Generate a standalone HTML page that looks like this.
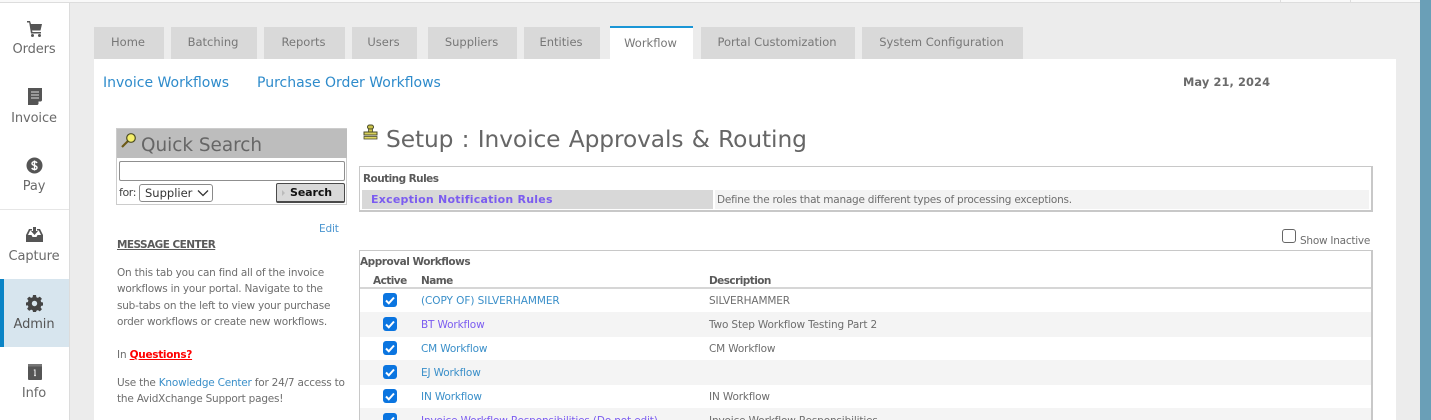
<!DOCTYPE html>
<html><head><meta charset="utf-8">
<style>
html,body{margin:0;padding:0;width:1431px;height:420px;overflow:hidden;background:#ececec}
*{box-sizing:border-box}
#w{position:relative;width:1431px;height:420px;overflow:hidden;background:#ececec}
.a{position:absolute}
.t{position:absolute;white-space:nowrap;line-height:16px}
.v{font-family:"DejaVu Sans",sans-serif}
.l{font-family:"DejaVu Sans",sans-serif;font-size:10.5px;color:#6e6e6e;letter-spacing:-.15px}
.m{letter-spacing:-.22px}
.h{font-weight:bold;color:#5a5a5a;letter-spacing:-.55px}
.tab{position:absolute;top:27px;height:32px;background:#d9d9d9;color:#777;font:11.5px/31px "DejaVu Sans",sans-serif;text-align:center;padding-right:2px}
.nav{position:absolute;left:-1px;width:70px;text-align:center;color:#6a6a6a;font:13px/16px "DejaVu Sans",sans-serif;letter-spacing:-.1px}
.lnk{color:#3a8fc9}.vis{color:#7b5cf0}
.cb{position:absolute;left:383px;width:14px;height:14px;border-radius:3px;background:#0b75e0}
.cb svg{display:block}
</style></head><body><div id="w">
<div class="a" style="left:0;top:0;width:1431px;height:3px;background:#f9f9f9;border-bottom:1px solid #ddd"></div>
<div class="a" style="left:1280px;top:0;width:1px;height:2px;background:#ddd"></div>
<div class="a" style="left:1350px;top:0;width:1px;height:2px;background:#ddd"></div>
<div class="a" style="left:1420px;top:0;width:11px;height:420px;background:#6a9fb7"></div>

<!-- sidebar -->
<div class="a" style="left:0;top:3px;width:70px;height:417px;background:#fff;border-right:1px solid #dcdcdc"></div>
<div class="a" style="left:0;top:209px;width:69px;height:1px;background:#e6e6e6"></div>
<div class="a" style="left:0;top:279px;width:69px;height:68px;background:#d7e5ee"></div>
<div class="a" style="left:0;top:279px;width:4px;height:68px;background:#0a84c6"></div>

<div class="nav" style="top:42px">Orders</div>
<svg class="a" style="left:27px;top:21px" width="16" height="16" viewBox="0 0 16 16"><path d="M0 0h3l1 3h11l-1.500 6.500H5L5.500 11H14v1.500H4L2.200 1.500H0z" fill="#555"/><circle cx="5.500" cy="14.500" r="1.500" fill="#555"/><circle cx="12.500" cy="14.500" r="1.500" fill="#555"/></svg>

<div class="nav" style="top:111px">Invoice</div>
<svg class="a" style="left:28px;top:88px" width="14" height="17" viewBox="0 0 14 17"><path d="M0 0h14v12.500L9.500 17H0z" fill="#555"/><path d="M3 4h8M3 7h8M3 10h8" stroke="#ddd" stroke-width="1"/><path d="M10.500 13.500H14L10.500 17z" fill="#fff"/></svg>

<div class="nav" style="top:179px">Pay</div>
<svg class="a" style="left:26px;top:157px" width="17" height="17" viewBox="0 0 17 17"><circle cx="8.500" cy="8.500" r="8" fill="#555"/><path d="M11 6c-.5-1-1.500-1.300-2.500-1.300S6 5.200 6 6.500 7.300 8 8.500 8.500 11 9.300 11 10.600s-1.300 1.800-2.500 1.800S6.300 12 5.800 11M8.500 3.500v10" stroke="#fff" stroke-width="1.400" fill="none"/></svg>

<div class="nav" style="top:249px">Capture</div>
<svg class="a" style="left:26px;top:227px" width="17" height="15" viewBox="0 0 17 15"><path d="M3 2h3v1.500H4.200L2 8h3.500l1 2h4l1-2H15l-2.200-4.500H11V2h3l3 6v7H0V8z" fill="#555"/><path d="M7 0h3v4h2L8.500 8 5 4h2z" fill="#555"/></svg>

<div class="nav" style="top:317px;color:#555">Admin</div>
<svg class="a" style="left:26px;top:295px" width="17" height="17" viewBox="0 0 17 17"><path d="M7 0h3l.4 2.300 1.500.6L13.800 1.600 15.900 3.700l-1.300 1.900.6 1.500L17 7.500v3l-1.800.4-.6 1.500 1.300 1.900-2.100 2.100-1.900-1.300-1.500.6L10 17H7l-.4-1.800-1.500-.6-1.900 1.300-2.100-2.100 1.300-1.900-.6-1.500L0 10.500v-3l1.800-.4.6-1.500L1.100 3.700 3.200 1.600l1.900 1.300 1.500-.6z" fill="#444"/><circle cx="8.500" cy="8.500" r="2.700" fill="#d7e5ee"/></svg>

<div class="nav" style="top:386px">Info</div>
<svg class="a" style="left:28px;top:364px" width="14" height="16" viewBox="0 0 14 16"><rect width="14" height="16" rx="1" fill="#555"/><rect y="0" width="14" height="2.500" fill="#777"/><path d="M7.500 6h-1.700M7 6.500v5M6 11.500h2" stroke="#ddd" stroke-width="1.200" fill="none"/></svg>

<!-- tabs -->
<div class="tab" style="left:94px;width:70px">Home</div>
<div class="tab" style="left:171px;width:86px">Batching</div>
<div class="tab" style="left:264px;width:81px">Reports</div>
<div class="tab" style="left:352px;width:65px">Users</div>
<div class="tab" style="left:428px;width:89px">Suppliers</div>
<div class="tab" style="left:524px;width:76px">Entities</div>
<div class="tab" style="left:701px;width:154px">Portal Customization</div>
<div class="tab" style="left:862px;width:161px">System Configuration</div>

<!-- content panel -->
<div class="a" style="left:94px;top:59px;width:1302px;height:361px;background:#fff"></div>
<div class="tab" style="left:610px;width:83px;top:26px;height:33px;background:#fff;border-top:2px solid #1b96d6;line-height:30px">Workflow</div>

<div class="t v" style="left:103px;top:74.500px;font-size:14px;color:#2e8bcb">Invoice Workflows</div>
<div class="t v" style="left:257px;top:74.500px;font-size:14px;color:#2e8bcb">Purchase Order Workflows</div>
<div class="t v" style="left:1183px;top:74px;font-size:11.4px;font-weight:bold;color:#6b6b6b;letter-spacing:.1px">May 21, 2024</div>

<!-- quick search -->
<div class="a" style="left:116px;top:128px;width:231px;height:77px;background:#fff;border:1px solid #ccc"></div>
<div class="a" style="left:117px;top:129px;width:230px;height:29px;background:#bdbdbd"></div>
<svg class="a" style="left:120px;top:132px" width="17" height="17" viewBox="0 0 17 17"><path d="M8 9L2 15" stroke="#6d5a18" stroke-width="2.200"/><circle cx="11" cy="6" r="4.300" fill="#f5ef6a" stroke="#4b4b20" stroke-width="1.200"/></svg>
<div class="t v" style="left:141px;top:135px;font-size:18.4px;line-height:22px;color:#666">Quick Search</div>
<div class="a" style="left:119px;top:161px;width:226px;height:20px;background:#fff;border:1px solid #8f8f8f;border-radius:2px"></div>
<div class="t l" style="left:119px;top:185px;font-size:11px;color:#444;letter-spacing:-.4px">for:</div>
<div class="a v" style="left:139px;top:184px;width:74px;height:18px;border:1px solid #8a8a8a;border-radius:3px;font-size:11.500px;line-height:16px;padding-left:5px;color:#333;background:#fff">Supplier<svg class="a" style="left:57px;top:4px" width="12" height="8" viewBox="0 0 12 8"><path d="M1 1.500l5 5 5-5" fill="none" stroke="#333" stroke-width="1.300"/></svg></div>
<div class="a v" style="left:276px;top:183px;width:69px;height:20px;background:#d9d9d9;border:1px solid #4a4a4a;border-bottom-width:2px;border-radius:2px;font-size:11px;font-weight:bold;line-height:17px;color:#111;text-align:center;padding-left:1px;letter-spacing:-.1px">Search</div>
<div class="a" style="left:282px;top:190px;width:0;height:0;border-left:3px solid #bbb;border-top:3px solid transparent;border-bottom:3px solid transparent"></div>

<!-- message center -->
<div class="t l" style="left:319px;top:221px;color:#4a95d0;font-size:10.5px;letter-spacing:-.15px">Edit</div>
<div class="t l h" style="left:117px;top:237px;text-decoration:underline">MESSAGE CENTER</div>
<div class="t l m" style="left:117px;top:265px">On this tab you can find all of the invoice</div>
<div class="t l m" style="left:117px;top:281px">workflows in your portal. Navigate to the</div>
<div class="t l m" style="left:117px;top:298px">sub-tabs on the left to view your purchase</div>
<div class="t l m" style="left:117px;top:314px">order workflows or create new workflows.</div>
<div class="t l" style="left:117px;top:347px">In <b style="color:#f00;text-decoration:underline;letter-spacing:-.3px">Questions?</b></div>
<div class="t l m" style="left:117px;top:375px">Use the <span style="color:#3a8fc9">Knowledge Center</span> for 24/7 access to</div>
<div class="t l m" style="left:117px;top:391px">the AvidXchange Support pages!</div>

<!-- heading -->
<svg class="a" style="left:363px;top:124px" width="15" height="16" viewBox="0 0 15 16"><rect x="4.500" y="1" width="6" height="4" rx="2" fill="#c9c24a" stroke="#4a4a2a"/><rect x="5.500" y="5" width="4" height="3" fill="#c9c24a" stroke="#4a4a2a" stroke-width=".8"/><rect x="1" y="8" width="13" height="3" fill="#d8d05a" stroke="#4a4a2a"/><rect x="1" y="12.500" width="13" height="2.500" fill="#e0d860" stroke="#4a4a2a" stroke-width=".8"/></svg>
<div class="t v" style="left:386px;top:125px;font-size:23.3px;line-height:30px;color:#666;letter-spacing:-.09px;word-spacing:1px">Setup : Invoice Approvals &amp; Routing</div>

<!-- routing rules -->
<div class="a" style="left:359px;top:166px;width:1014px;height:46px;border:1px solid #c8c8c8;border-width:1px 2px 2px 1px;background:#fff"></div>
<div class="t l h" style="left:363px;top:171px">Routing Rules</div>
<div class="a" style="left:362px;top:190px;width:351px;height:19px;background:#d8d8d8"></div>
<div class="a" style="left:715px;top:190px;width:654px;height:19px;background:#f3f3f3"></div>
<div class="t v" style="left:371px;top:192px;font-size:11px;font-weight:bold;color:#7b5cf0;letter-spacing:.23px">Exception Notification Rules</div>
<div class="t l" style="left:717px;top:192px;letter-spacing:-.24px">Define the roles that manage different types of processing exceptions.</div>

<div class="a" style="left:1282px;top:229px;width:14px;height:14px;border:1px solid #666;border-radius:3px;background:#fff"></div>
<div class="t l" style="left:1300px;top:233px;letter-spacing:-.25px">Show Inactive</div>

<!-- approval workflows -->
<div class="a" style="left:359px;top:250px;width:1014px;height:180px;border:1px solid #c8c8c8;border-width:1px 2px 2px 1px;background:#fff"></div>
<div class="t l h" style="left:360px;top:254px;letter-spacing:-.47px">Approval Workflows</div>
<div class="t l h" style="left:373px;top:272.500px">Active</div>
<div class="t l h" style="left:421px;top:272.500px">Name</div>
<div class="t l h" style="left:709px;top:272.500px">Description</div>
<div class="a" style="left:360px;top:287px;width:1011px;height:2px;background:#d6d6d6"></div>
<div class="a" style="left:360px;top:312px;width:1011px;height:25px;background:#f4f4f4"></div>
<div class="a" style="left:360px;top:360px;width:1011px;height:25px;background:#f4f4f4"></div>
<div class="a" style="left:360px;top:408px;width:1011px;height:12px;background:#f4f4f4"></div>

<div class="cb" style="top:293px"><svg width="14" height="14" viewBox="0 0 14 14"><path d="M3 7.500l2.800 2.800L11 4.500" fill="none" stroke="#fff" stroke-width="2"/></svg></div>
<div class="cb" style="top:317px"><svg width="14" height="14" viewBox="0 0 14 14"><path d="M3 7.500l2.800 2.800L11 4.500" fill="none" stroke="#fff" stroke-width="2"/></svg></div>
<div class="cb" style="top:341px"><svg width="14" height="14" viewBox="0 0 14 14"><path d="M3 7.500l2.800 2.800L11 4.500" fill="none" stroke="#fff" stroke-width="2"/></svg></div>
<div class="cb" style="top:365px"><svg width="14" height="14" viewBox="0 0 14 14"><path d="M3 7.500l2.800 2.800L11 4.500" fill="none" stroke="#fff" stroke-width="2"/></svg></div>
<div class="cb" style="top:389px"><svg width="14" height="14" viewBox="0 0 14 14"><path d="M3 7.500l2.800 2.800L11 4.500" fill="none" stroke="#fff" stroke-width="2"/></svg></div>
<div class="cb" style="top:413px"><svg width="14" height="14" viewBox="0 0 14 14"><path d="M3 7.500l2.800 2.800L11 4.500" fill="none" stroke="#fff" stroke-width="2"/></svg></div>

<div class="t l lnk" style="left:421px;top:293px;letter-spacing:-.06px">(COPY OF) SILVERHAMMER</div>
<div class="t l vis" style="left:421px;top:317px">BT Workflow</div>
<div class="t l lnk" style="left:421px;top:341px">CM Workflow</div>
<div class="t l lnk" style="left:421px;top:365px">EJ Workflow</div>
<div class="t l lnk" style="left:421px;top:389px">IN Workflow</div>
<div class="t l vis" style="left:421px;top:413px">Invoice Workflow Responsibilities (Do not edit)</div>

<div class="t l" style="left:709px;top:293px">SILVERHAMMER</div>
<div class="t l" style="left:709px;top:317px">Two Step Workflow Testing Part 2</div>
<div class="t l" style="left:709px;top:341px">CM Workflow</div>
<div class="t l" style="left:709px;top:389px">IN Workflow</div>
<div class="t l" style="left:709px;top:413px">Invoice Workflow Responsibilities</div>
</div></body></html>
